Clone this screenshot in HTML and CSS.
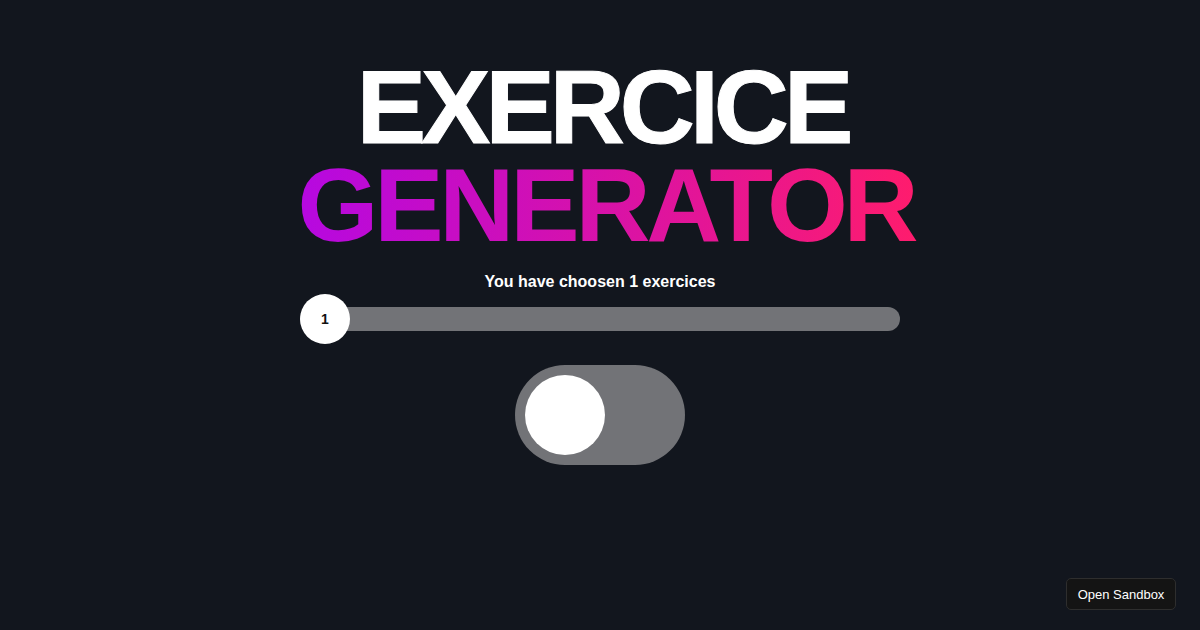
FILE: index.html
```html
<!DOCTYPE html>
<html lang="en">
<head>
<meta charset="utf-8">
<title>Exercice Generator</title>
<link rel="stylesheet" href="styles.css">
</head>
<body>
<main class="page">
  <h1 class="title">
    <span class="title-line title-white">EXERCICE</span>
    <span class="title-line title-gradient">GENERATOR</span>
  </h1>
  <p class="count">You have choosen 1 exercices</p>
  <div class="slider">
    <div class="slider-track"></div>
    <div class="slider-thumb">1</div>
  </div>
  <div class="toggle">
    <div class="toggle-knob"></div>
  </div>
</main>
<button class="sandbox">Open Sandbox</button>
</body>
</html>
```

FILE: styles.css
```css
html, body {
  margin: 0;
  padding: 0;
  background: #12161e;
  height: 100%;
}
body {
  font-family: "Liberation Sans", Arial, sans-serif;
  color: #fff;
  overflow: hidden;
}
.page {
  display: flex;
  flex-direction: column;
  align-items: center;
  padding-top: 58px;
}
.title {
  margin: 0;
  display: flex;
  flex-direction: column;
  align-items: center;
  font-size: 104px;
  font-weight: 700;
  line-height: 98px;
}
.title-line {
  display: block;
}
.title-white {
  color: #fff;
  letter-spacing: -5px;
  -webkit-text-stroke: 1px #fff;
  margin-right: -5px;
}
.title-gradient {
  letter-spacing: -4.2px;
  padding: 0 6px;
  margin-left: 8px;
  margin-right: -4px;
  background: linear-gradient(90deg, #b508e2 0%, #d812a8 50%, #ff1c6c 100%);
  -webkit-background-clip: text;
  background-clip: text;
  color: transparent;
}
.count {
  margin: 18px 0 0;
  font-size: 16px;
  font-weight: 700;
  line-height: 20px;
}
.slider {
  position: relative;
  margin-top: 2px;
  width: 600px;
  height: 50px;
  display: flex;
  align-items: center;
}
.slider-track {
  width: 100%;
  height: 24px;
  border-radius: 12px;
  background: #727377;
}
.slider-thumb {
  position: absolute;
  left: 0;
  top: 0;
  width: 50px;
  height: 50px;
  border-radius: 50%;
  background: #fff;
  color: #111;
  font-size: 14px;
  font-weight: 700;
  display: flex;
  align-items: center;
  justify-content: center;
}
.toggle {
  margin-top: 21px;
  width: 170px;
  height: 100px;
  border-radius: 50px;
  background: #727377;
  display: flex;
  align-items: center;
  padding-left: 10px;
  box-sizing: border-box;
}
.toggle-knob {
  width: 80px;
  height: 80px;
  border-radius: 50%;
  background: #fff;
}
.sandbox {
  position: fixed;
  right: 24px;
  bottom: 20px;
  width: 110px;
  height: 32px;
  background: #141414;
  color: #fff;
  border: 1px solid #2e2e2e;
  border-radius: 5px;
  font-family: "Liberation Sans", Arial, sans-serif;
  font-size: 13px;
  padding: 0;
}
```
